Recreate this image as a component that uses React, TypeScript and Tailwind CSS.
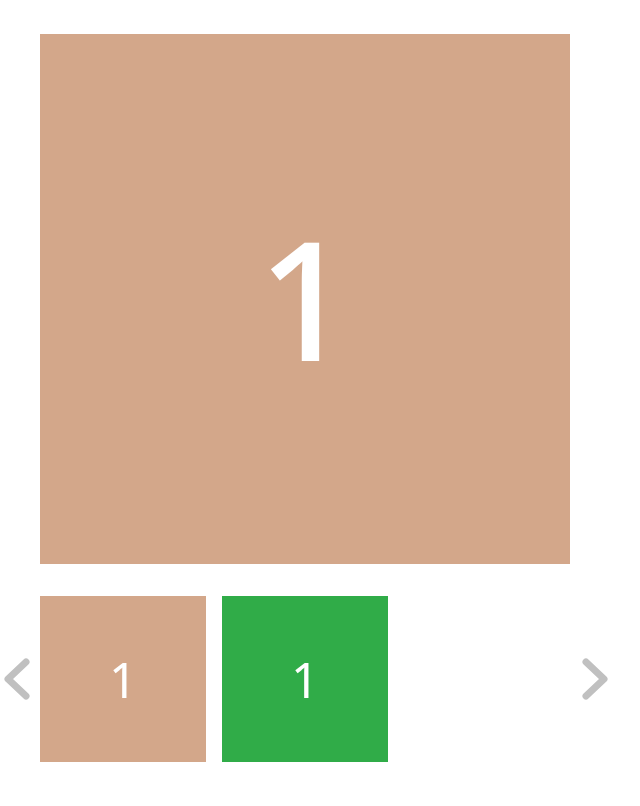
import { ReactNode } from 'react';

// 缩略图轮播：上方主图，下方缩略图列表，两侧为切换箭头

const TAN = 'bg-[#d3a78a]';
const GREEN = 'bg-[#30ac48]';

function Slide({ label, className }: { label: string; className: string }) {
  return (
    <div className={`flex items-center justify-center text-white ${className}`}>
      {label}
    </div>
  );
}

function Arrow({ dir }: { dir: 'left' | 'right' }) {
  const points = dir === 'left' ? '22,4 4,21 22,38' : '4,4 22,21 4,38';
  return (
    <svg width="26" height="42" viewBox="0 0 26 42" fill="none">
      <polyline
        points={points}
        stroke="#c0c0c0"
        strokeWidth="7"
        strokeLinecap="round"
        strokeLinejoin="round"
      />
    </svg>
  );
}

function NavButton({ dir, children }: { dir: 'left' | 'right'; children?: ReactNode }) {
  return (
    <button
      type="button"
      className={`absolute top-1/2 -translate-y-1/2 ${dir === 'left' ? 'left-[-36px]' : 'right-[-38px]'}`}
    >
      {children ?? <Arrow dir={dir} />}
    </button>
  );
}

export default function App() {
  return (
    <div className="min-h-screen bg-white px-[40px] pt-[34px] font-['Noto_Sans',Helvetica,Arial,sans-serif]">
      <div className="flex w-[530px] flex-col gap-[32px]">
        <Slide
          label="1"
          className={`h-[530px] w-[530px] pb-[4px] text-[165px] font-medium leading-none ${TAN}`}
        />

        <div className="relative">
          <div className="flex gap-[16px]">
            <Slide label="1" className={`h-[166px] w-[166px] text-[49px] leading-none ${TAN}`} />
            <Slide label="1" className={`h-[166px] w-[166px] text-[49px] leading-none ${GREEN}`} />
          </div>
          <NavButton dir="left" />
          <NavButton dir="right" />
        </div>
      </div>
    </div>
  );
}
